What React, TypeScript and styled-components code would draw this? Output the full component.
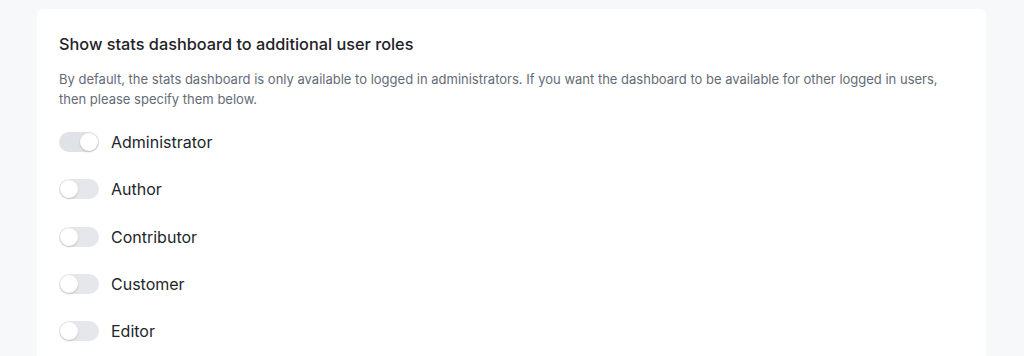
import React from "react";
import styled, { createGlobalStyle } from "styled-components";

const roles = [
  { name: "Administrator", checked: true },
  { name: "Author", checked: false },
  { name: "Contributor", checked: false },
  { name: "Customer", checked: false },
  { name: "Editor", checked: false },
];

export default function App() {
  return (
    <>
      <GlobalStyle />
      <Page>
        <Card>
          <Title>Show stats dashboard to additional user roles</Title>
          <Description>
            By default, the stats dashboard is only available to logged in administrators. If you want the dashboard to be available for other logged in users,
            then please specify them below.
          </Description>
          <RoleList>
            {roles.map((role) => (
              <RoleRow key={role.name}>
                <Track checked={role.checked}>
                  <Knob checked={role.checked} />
                </Track>
                <RoleLabel>{role.name}</RoleLabel>
              </RoleRow>
            ))}
          </RoleList>
        </Card>
      </Page>
    </>
  );
}

const GlobalStyle = createGlobalStyle`
  html, body {
    margin: 0;
    padding: 0;
    background: #f7f8fa;
    font-family: Inter, "Noto Sans", sans-serif;
  }
`;

const Page = styled.div`
  padding: 9px 38px 0 37px;
  height: 356px;
  box-sizing: border-box;
  overflow: hidden;
`;

const Card = styled.div`
  background: #ffffff;
  border-radius: 6px;
  padding: 25px 22px 40px;
  min-height: 400px;
  box-sizing: border-box;
`;

const Title = styled.div`
  font-size: 16.3px;
  font-weight: 500;
  color: #1f2328;
  line-height: 20px;
`;

const Description = styled.p`
  margin: 15px 0 0;
  font-size: 13px;
  line-height: 20px;
  color: #646b77;
`;

const RoleList = styled.div`
  display: flex;
  flex-direction: column;
  gap: 27.3px;
  margin-top: 23px;
`;

const RoleRow = styled.div`
  display: flex;
  align-items: center;
  gap: 12px;
  height: 20px;
`;

const Track = styled.div<{ checked: boolean }>`
  width: 40px;
  height: 20px;
  border-radius: 10px;
  background: ${(p) => (p.checked ? "#dfe2e7" : "#e5e7eb")};
  position: relative;
  flex-shrink: 0;
`;

const Knob = styled.span<{ checked: boolean }>`
  position: absolute;
  top: 1px;
  left: ${(p) => (p.checked ? "21px" : "1px")};
  width: 18px;
  height: 18px;
  border-radius: 50%;
  background: #ffffff;
  box-shadow: 0 1px 2px rgba(0, 0, 0, 0.18);
`;

const RoleLabel = styled.span`
  font-size: 16px;
  color: #22262b;
`;
